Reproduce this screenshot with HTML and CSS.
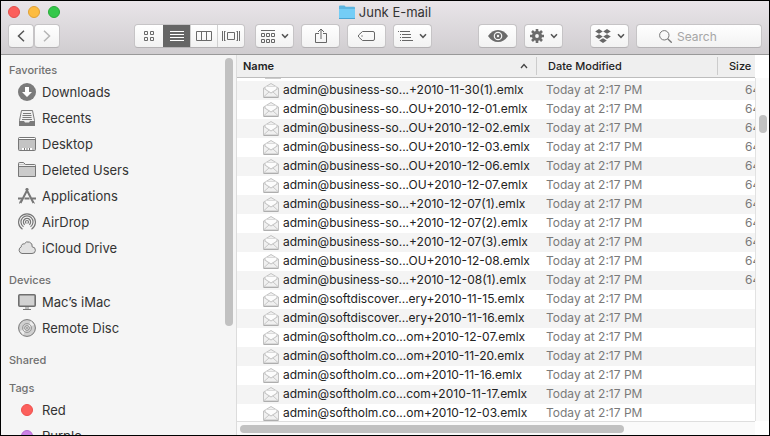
FILE: index.html
```html
<!DOCTYPE html>
<html lang="en">
<head>
<meta charset="utf-8">
<title>Junk E-mail</title>
<link rel="stylesheet" href="styles.css">
</head>
<body>
<svg class="defs" aria-hidden="true">
  <symbol id="mail" viewBox="0 0 16 15">
    <path d="M.5 5 8 .5 15.500 5v9H.5z" fill="#f0f0f0" stroke="#c2c2c2"/>
    <path d="M2.500 6.500v-3h11v3L8 10z" fill="#fcfcfc" stroke="#dadada"/>
    <path d="M1 13.500 6 9M15 13.500 10 9M1 5.500 8 10l7-4.500" fill="none" stroke="#c8c8c8"/>
    <path d="M.5 14.500h15" stroke="#aeaeae"/>
  </symbol>
  <symbol id="chev" viewBox="0 0 8 6"><path d="M1 1.200 4 4.300 7 1.200" fill="none" stroke="#555" stroke-width="1.500"/></symbol>
</svg>
<div class="window">
  <header class="bar">
    <div class="titlebar">
      <div class="lights">
        <button class="light close" aria-label="Close"></button>
        <button class="light min" aria-label="Minimize"></button>
        <button class="light max" aria-label="Zoom"></button>
      </div>
      <h1 class="title">
        <svg width="16" height="14" viewBox="0 0 16 14"><path d="M0 1.500Q0 .5 1 .5h4.500l1.200 1.300H15q1 0 1 1V13H0z" fill="#5bb5e0"/><path d="M0 4h16v8.500q0 1-1 1H1q-1 0-1-1z" fill="#74cdf6"/><path d="M0 13.500h16" stroke="#4ba4d2"/></svg>
        Junk E-mail
      </h1>
    </div>
    <div class="toolbar">
      <div class="nav">
        <button class="btn" aria-label="Back"><svg width="8" height="12" viewBox="0 0 8 12"><path d="M7 .8 1.500 6 7 11.200" fill="none" stroke="#555" stroke-width="1.500"/></svg></button>
        <button class="btn" aria-label="Forward"><svg width="8" height="12" viewBox="0 0 8 12"><path d="M1 .8 6.500 6 1 11.200" fill="none" stroke="#b5b5b5" stroke-width="1.500"/></svg></button>
      </div>
      <div class="views">
        <button class="seg" aria-label="Icon view"><svg width="10" height="10" viewBox="0 0 10 10" fill="none" stroke="#6a6a6a"><path d="M.5.5h3v3h-3zM6.500.5h3v3h-3zM.5 6.500h3v3h-3zM6.500 6.500h3v3h-3z"/></svg></button>
        <button class="seg on" aria-label="List view" aria-pressed="true"><svg width="14" height="10" viewBox="0 0 14 10" stroke="#fff"><path d="M0 .5h14M0 3.500h14M0 6.500h14M0 9.500h14"/></svg></button>
        <button class="seg" aria-label="Column view"><svg width="16" height="10" viewBox="0 0 16 10" fill="none" stroke="#6a6a6a"><path d="M.5.5h15v9H.5zM5.500.5v9M10.500.5v9"/></svg></button>
        <button class="seg" aria-label="Cover flow view"><svg width="18" height="10" viewBox="0 0 18 10" fill="none" stroke="#6a6a6a"><path d="M5.500 1.500h7v7h-7zM.5 0v10M2.500.5h1M2.500 0v10M2.500 9.500h1M17.500 0v10M15.500.5h-1M15.500 0v10M15.500 9.500h-1"/></svg></button>
      </div>
      <div class="tools">
        <button class="btn wide" aria-label="Arrange"><svg width="14" height="13" viewBox="0 0 14 13" fill="none" stroke="#666"><path d="M0 .5h14M.5 3.500h3v3h-3zM5.500 3.500h3v3h-3zM10.500 3.500h3v3h-3zM.5 9.500h3v3h-3zM5.500 9.500h3v3h-3zM10.500 9.500h3v3h-3z"/></svg><svg class="chev" width="8" height="6"><use href="#chev"/></svg></button>
        <button class="btn wide" aria-label="Share"><svg width="12" height="16" viewBox="0 0 12 16" fill="none" stroke="#666"><path d="M4 5.500H.5v9h11v-9H8M6 11V1M3 4l3-3 3 3"/></svg></button>
        <button class="btn wide" aria-label="Edit tags"><svg width="17" height="10" viewBox="0 0 17 10" fill="none" stroke="#666"><path d="M4.500.5H15q1.500 0 1.500 1.500v6q0 1.500-1.500 1.500H4.500L.7 6Q.1 5 .7 4z"/><circle cx="4" cy="5" r=".7" fill="#666" stroke="none"/></svg></button>
        <button class="btn wide" aria-label="Item list"><svg width="15" height="11" viewBox="0 0 15 11" stroke="#666"><path d="M0 .5h1M2 .5h10M2 3.500h1M4 3.500h9M2 6.500h1M4 6.500h9M2 9.500h1M4 9.500h11"/></svg><svg class="chev" width="8" height="6"><use href="#chev"/></svg></button>
      </div>
      <div class="tools mid">
        <button class="btn wide" aria-label="Quick Look"><svg width="20" height="12" viewBox="0 0 20 12"><path d="M0 6Q4 0 10 0T20 6Q16 12 10 12T0 6z" fill="#6b6b6b"/><circle cx="10" cy="6" r="4.300" fill="#f6f6f6"/><circle cx="10" cy="6" r="3.100" fill="#6b6b6b"/><circle cx="10" cy="6" r="1.200" fill="#f6f6f6"/></svg></button>
        <button class="btn wide" aria-label="Action"><svg width="14" height="14" viewBox="-7 -7 14 14"><path d="M0-7V7M-7 0H7M-5-5 5 5M-5 5 5-5" stroke="#6b6b6b" stroke-width="2.600"/><circle r="3.600" fill="none" stroke="#6b6b6b" stroke-width="3"/><circle r="1.900" fill="#f6f6f6"/></svg><svg class="chev" width="8" height="6"><use href="#chev"/></svg></button>
      </div>
      <div class="tools last">
        <button class="btn wide" aria-label="Dropbox"><svg width="16" height="14" viewBox="0 0 16 14" fill="#666"><path d="M4 0 7.800 2.400 4 4.800.2 2.400zM12 0l3.800 2.400L12 4.800 8.200 2.400zM4 5.200l3.800 2.400L4 10 .2 7.600zM12 5.200l3.800 2.400L12 10 8.200 7.600zM8 9.200l3.800 2.400L8 14l-3.800-2.400z"/></svg><svg class="chev" width="8" height="6"><use href="#chev"/></svg></button>
      </div>
      <label class="search">
        <svg width="13" height="13" viewBox="0 0 13 13" fill="none" stroke="#777"><circle cx="5.300" cy="5.300" r="4.700"/><path d="m8.700 8.700 4 4" stroke-width="1.300"/></svg>
        <input type="search" placeholder="Search" aria-label="Search">
      </label>
    </div>
  </header>
  <div class="content">
    <div class="sidebar">
      <nav class="places">
        <h2>Favorites</h2>
        <a href="#"><svg class="ic" viewBox="0 0 18 18"><circle cx="9" cy="9" r="9" fill="#7b7b7b"/><path d="M7 4h4v5h3l-5 5-5-5h3z" fill="#fff"/></svg>Downloads</a>
        <a href="#"><svg class="ic" viewBox="0 0 18 18"><path d="M3.500 1.500h11l2 10v5h-15v-5z" fill="#f0f0f0" stroke="#7b7b7b"/><path d="M5 4.500h8M4.500 6.500h9M4.500 8.500h9M4 10.500h10" stroke="#7b7b7b"/><path d="M1 12h5l1 1.500h4L12 12h5v5H1z" fill="#7b7b7b"/></svg>Recents</a>
        <a href="#"><svg class="ic" viewBox="0 0 18 18"><rect x=".5" y="2.500" width="17" height="13" rx="1" fill="#c4c4c4" stroke="#777"/><path d="M1 3.500h16" stroke="#fff"/><path d="M1 4.500h16" stroke="#777"/><path d="M4 13h10v2H4z" fill="#fff"/><path d="M6.500 13v2M9 13v2M11.500 13v2" stroke="#777"/></svg>Desktop</a>
        <a href="#"><svg class="ic" viewBox="0 0 18 18"><path d="M.5 15.500v-13q0-1 1-1h4l2 2h9q1 0 1 1v11z" fill="#cbcbcb" stroke="#777"/><path d="M1 5.500h16" stroke="#777"/><path d="M1 4.500h16M1.500 2.500h4" stroke="#f0f0f0"/></svg>Deleted Users</a>
        <a href="#"><svg class="ic" viewBox="0 0 18 18" fill="none" stroke="#777"><path d="M8 1.500 15.500 16M10 1.500 2.500 16" stroke-width="2"/><path d="M0 11.500h4M6.500 11.500h5M14 11.500h4" stroke-width="2"/><path d="m1.500 16.500 1-3M16.500 16.500l-2-3"/></svg>Applications</a>
        <a href="#"><svg class="ic" viewBox="0 0 18 18" fill="none" stroke="#777" stroke-width="1.200"><path d="M4.500 16.300a8.400 8.400 0 1 1 9 0M5.500 13.800a6 6 0 1 1 7 0M6.700 11.700a3.600 3.600 0 1 1 4.600 0"/><circle cx="9" cy="9" r="1.500"/><path d="m9 10.500-3.500 6M9 10.500l3.500 6" stroke="#f5f5f5"/></svg>AirDrop</a>
        <a href="#"><svg class="ic" viewBox="0 0 18 18"><path d="M4 14.500a3.500 3.500 0 0 1-.7-6.700 2.500 2.500 0 0 1 3-2.900 4.300 4.300 0 0 1 7.900 3A3.300 3.300 0 0 1 14 14.500z" fill="#e2e2e2" stroke="#777"/></svg>iCloud Drive</a>
        <h2>Devices</h2>
        <a href="#"><svg class="ic" viewBox="0 0 18 18"><rect x=".8" y="1.800" width="16.400" height="11.400" rx="1" fill="#d2d2d2" stroke="#6f6f6f" stroke-width="1.600"/><path d="M7 14h4v2H7z" fill="#bbb"/><path d="M5 16.500h8" stroke="#777"/></svg>Mac’s iMac</a>
        <a href="#"><svg class="ic" viewBox="0 0 18 18" fill="none"><circle cx="9" cy="9" r="8.400" fill="#d0d0d0" stroke="#777"/><path d="m9 9 4-7 3 4zM9 9l-4 7-3-4z" fill="#eee"/><circle cx="9" cy="9" r="4.500" stroke="#999"/><circle cx="9" cy="9" r="2.300" fill="#eee" stroke="#888"/><circle cx="9" cy="9" r=".9" fill="#888"/></svg>Remote Disc</a>
        <h2>Shared</h2>
        <h2>Tags</h2>
        <a href="#"><span class="tag red"></span>Red</a>
        <a href="#"><span class="tag purple"></span>Purple</a>
      </nav>
      <div class="track"><div class="thumb side"></div></div>
    </div>
    <main class="files">
      <div class="list">
        <table>
          <colgroup><col><col class="c-date"><col class="c-size"></colgroup>
          <thead>
            <tr><th><div class="sort">Name<svg width="8" height="6" viewBox="0 0 8 6"><path d="M1 5 4 1.500 7 5" fill="none" stroke="#444" stroke-width="1.300"/></svg></div></th><th class="med">Date Modified</th><th class="med">Size</th></tr>
          </thead>
          <tbody>
            <tr class="peek"><td colspan="3"><div></div></td></tr>
            <tr><td><svg class="mail"><use href="#mail"/></svg>admin@business-so...+2010-11-30(1).emlx</td><td>Today at 2:17 PM</td><td>64</td></tr>
            <tr><td><svg class="mail"><use href="#mail"/></svg>admin@business-so...OU+2010-12-01.emlx</td><td>Today at 2:17 PM</td><td>64</td></tr>
            <tr><td><svg class="mail"><use href="#mail"/></svg>admin@business-so...OU+2010-12-02.emlx</td><td>Today at 2:17 PM</td><td>64</td></tr>
            <tr><td><svg class="mail"><use href="#mail"/></svg>admin@business-so...OU+2010-12-03.emlx</td><td>Today at 2:17 PM</td><td>64</td></tr>
            <tr><td><svg class="mail"><use href="#mail"/></svg>admin@business-so...OU+2010-12-06.emlx</td><td>Today at 2:17 PM</td><td>64</td></tr>
            <tr><td><svg class="mail"><use href="#mail"/></svg>admin@business-so...OU+2010-12-07.emlx</td><td>Today at 2:17 PM</td><td>64</td></tr>
            <tr><td><svg class="mail"><use href="#mail"/></svg>admin@business-so...+2010-12-07(1).emlx</td><td>Today at 2:17 PM</td><td>64</td></tr>
            <tr><td><svg class="mail"><use href="#mail"/></svg>admin@business-so...+2010-12-07(2).emlx</td><td>Today at 2:17 PM</td><td>64</td></tr>
            <tr><td><svg class="mail"><use href="#mail"/></svg>admin@business-so...+2010-12-07(3).emlx</td><td>Today at 2:17 PM</td><td>64</td></tr>
            <tr><td><svg class="mail"><use href="#mail"/></svg>admin@business-so...OU+2010-12-08.emlx</td><td>Today at 2:17 PM</td><td>64</td></tr>
            <tr><td><svg class="mail"><use href="#mail"/></svg>admin@business-so...+2010-12-08(1).emlx</td><td>Today at 2:17 PM</td><td>64</td></tr>
            <tr><td><svg class="mail"><use href="#mail"/></svg>admin@softdiscover...ery+2010-11-15.emlx</td><td>Today at 2:17 PM</td><td></td></tr>
            <tr><td><svg class="mail"><use href="#mail"/></svg>admin@softdiscover...ery+2010-11-16.emlx</td><td>Today at 2:17 PM</td><td></td></tr>
            <tr><td><svg class="mail"><use href="#mail"/></svg>admin@softholm.co...om+2010-12-07.emlx</td><td>Today at 2:17 PM</td><td></td></tr>
            <tr><td><svg class="mail"><use href="#mail"/></svg>admin@softholm.co...om+2010-11-20.emlx</td><td>Today at 2:17 PM</td><td></td></tr>
            <tr><td><svg class="mail"><use href="#mail"/></svg>admin@softholm.co...om+2010-11-16.emlx</td><td>Today at 2:17 PM</td><td></td></tr>
            <tr><td><svg class="mail"><use href="#mail"/></svg>admin@softholm.co...com+2010-11-17.emlx</td><td>Today at 2:17 PM</td><td></td></tr>
            <tr><td><svg class="mail"><use href="#mail"/></svg>admin@softholm.co...om+2010-12-03.emlx</td><td>Today at 2:17 PM</td><td></td></tr>
          </tbody>
        </table>
      </div>
      <div class="vscroll"><div class="thumb"></div></div>
      <div class="hscroll"><div class="thumb"></div></div>
      <div class="corner"></div>
    </main>
  </div>
</div>
</body>
</html>
```
FILE: styles.css
```css
* { box-sizing: border-box; }
body {
  margin: 0;
  font-family: Inter, "Liberation Sans", sans-serif;
  font-size: 12px;
  color: #222;
}
.defs { position: absolute; width: 0; height: 0; }
button { padding: 0; border: 0; font: inherit; }
h1, h2 { margin: 0; }

.window {
  height: 100vh;
  border: 1px solid #000;
  display: flex;
  flex-direction: column;
  overflow: hidden;
}
.bar {
  flex: none;
  height: 54px;
  background: linear-gradient(#e9e5e9, #d0cdd0);
  border-bottom: 1px solid #999;
}
.titlebar {
  height: 22px;
  padding: 0 7px;
  display: grid;
  grid-template-columns: 1fr auto 1fr;
  align-items: center;
}
.lights { display: flex; gap: 8px; }
.light { width: 12px; height: 12px; border-radius: 50%; border: 1px solid; }
.close { background: #fc605c; border-color: #e2504c; }
.min { background: #fdbc40; border-color: #e0a035; }
.max { background: #34c84a; border-color: #28ab38; }
.title {
  display: flex;
  align-items: center;
  gap: 4px;
  font-size: 13px;
  font-weight: 400;
  color: #333;
}

.toolbar { display: flex; align-items: center; padding: 1px 7px 0; }
.btn, .seg {
  height: 24px;
  display: flex;
  align-items: center;
  justify-content: center;
  background: linear-gradient(#fff, #f2f2f2);
}
.btn { border: 1px solid #c6c4c6; border-bottom-color: #b4b2b4; border-radius: 4px; }
.nav { display: flex; }
.nav .btn { width: 26px; }
.wide { width: 39px; }
.views {
  display: flex;
  margin-left: 74px;
  border-radius: 4px;
  border: 1px solid #c6c4c6;
  border-bottom-color: #b4b2b4;
  overflow: hidden;
}
.seg { width: 27px; height: 22px; border-left: 1px solid #d0d0d0; }
.seg:first-child { width: 28px; border-left: 0; }
.seg.on { background: #666; border-color: #666; }
.tools { display: flex; gap: 7px; margin-left: 10px; }
.mid { margin-left: auto; }
.last { margin-left: 27px; }
.chev { margin-left: 6px; }
.search {
  width: 126px;
  height: 24px;
  margin-left: 7px;
  padding-left: 22px;
  display: flex;
  align-items: center;
  gap: 5px;
  background: linear-gradient(#fff, #f2f2f2);
  border: 1px solid #c6c4c6;
  border-bottom-color: #b4b2b4;
  border-radius: 4px;
}
.search input {
  width: 70px;
  padding: 0;
  border: 0;
  background: none;
  font: inherit;
}
.search input::placeholder { color: #a6a6a6; }

.content { flex: 1; min-height: 0; display: flex; }
.sidebar {
  flex: none;
  width: 236px;
  display: flex;
  background: #f5f5f5;
  border-right: 1px solid #dcdcdc;
  overflow: hidden;
}
.places { flex: 1; }
.places h2 {
  height: 28px;
  padding: 10px 0 0 8px;
  font-size: 11px;
  line-height: 18px;
  font-weight: 500;
  color: #707070;
}
.places h2:first-child { height: 24px; padding-top: 6px; }
.places a {
  display: flex;
  align-items: center;
  gap: 6px;
  height: 26px;
  padding-left: 17px;
  font-size: 13px;
  color: #333;
  text-decoration: none;
}
.ic { width: 18px; height: 18px; flex: none; }
.tag { width: 12px; height: 12px; margin: 0 3px; border-radius: 50%; border: 1px solid; }
.red { background: #fc605c; border-color: #f04f4c; }
.purple { background: #cc82e6; border-color: #b66cd2; }
.track { width: 11px; padding: 3px 3px 0 0; }
.thumb { background: #c1c1c1; border-radius: 4px; }
.side { height: 71%; }

.files {
  flex: 1;
  min-width: 0;
  display: grid;
  grid-template-columns: 1fr 14px;
  grid-template-rows: 1fr 14px;
  background: #fff;
}
.list { overflow: hidden; min-height: 0; }
table { width: 100%; table-layout: fixed; border-spacing: 0; }
.c-date { width: 181px; }
.c-size { width: 38px; }
th {
  height: 23px;
  padding: 0 0 1px 6px;
  background: #efefef;
  border-bottom: 1px solid #bdbdbd;
  font-size: 11px;
  font-weight: 600;
  text-align: left;
}
.med { font-weight: 500; padding-left: 12px; background: linear-gradient(#ccc, #ccc) 0 2px / 1px 18px no-repeat #efefef; }
.sort { display: flex; justify-content: space-between; align-items: center; padding-right: 8px; }
td {
  height: 19px;
  padding: 0 0 0 10px;
  line-height: 18px;
  white-space: nowrap;
  overflow: hidden;
  vertical-align: top;
  color: #7a7a7a;
}
td:first-child { padding-left: 26px; color: #222; }
td:last-child { padding-left: 28px; }
tbody tr:nth-child(even) { background: #f4f4f4; }
.peek td { height: 3px; line-height: 0; }
.peek div { width: 16px; height: 3px; border-top: 1px solid #ccc; }
.mail { width: 16px; height: 15px; margin: 2px 4px 0 0; float: left; }
.vscroll { margin-top: 23px; padding: 37px 2px 0 3px; background: #fafafa; border-left: 1px solid #e2e2e2; }
.vscroll .thumb { height: 18px; }
.hscroll { padding: 3px; background: #fafafa; border-top: 1px solid #dedede; }
.hscroll .thumb { width: 75%; height: 8px; }
.corner { background: #fff; }
```
